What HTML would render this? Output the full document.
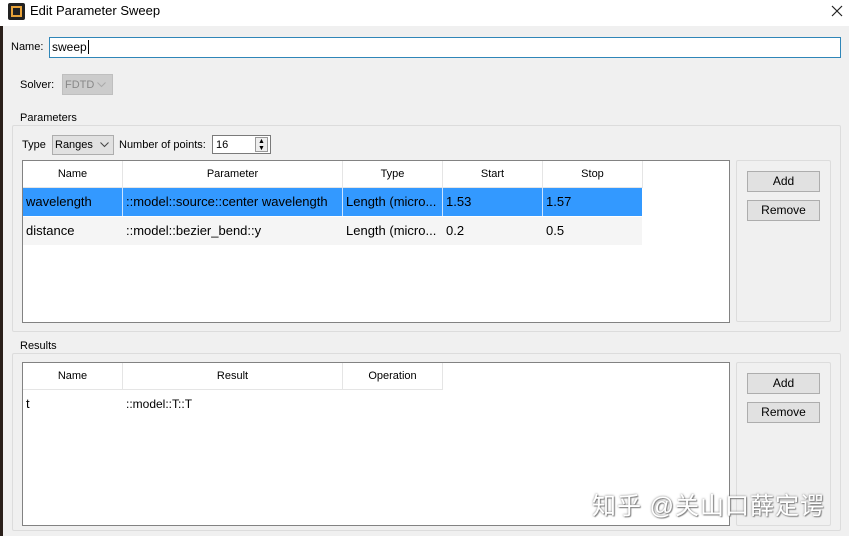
<!DOCTYPE html>
<html><head><meta charset="utf-8"><style>
*{margin:0;padding:0;box-sizing:border-box}
body{width:849px;height:536px;background:#f0f0f0;font-family:"Liberation Sans","Noto Sans CJK SC",sans-serif;font-size:12px;color:#000;position:relative;overflow:hidden}
.a{position:absolute}
.title{left:0;top:0;width:849px;height:26px;background:#fff}
.grp{border:1px solid #dcdcdc;border-radius:2px}
.tbl{background:#fff;border:1px solid #828282}
.hd{background:#fff;border-right:1px solid #e5e5e5;border-bottom:1px solid #e5e5e5;text-align:center;line-height:26px;font-size:11px}
.btn{background:#e1e1e1;border:1px solid #adadad;text-align:center;line-height:18px;font-size:12px}
.cell{font-size:13px;line-height:28px;padding-left:3px;white-space:nowrap}
</style></head><body>
<div class="a title"></div>
<div class="a" style="left:8px;top:3px;width:17px;height:17px;background:#222;border-radius:2px"></div>
<div class="a" style="left:11px;top:6px;width:11px;height:11px;border:2px solid #e8a33a;background:#222"></div>
<div class="a" style="left:30px;top:3px;font-size:13px">Edit Parameter Sweep</div>
<svg class="a" style="left:831px;top:5px" width="12" height="12"><path d="M1 1L11 11M11 1L1 11" stroke="#222" stroke-width="1.2"/></svg>
<div class="a" style="left:0;top:26px;width:3px;height:510px;background:#2a1f1a"></div>

<div class="a" style="left:11px;top:41px;font-size:11px">Name:</div>
<div class="a" style="left:49px;top:37px;width:792px;height:21px;background:#fff;border:1px solid #2f86b8;font-size:12px;padding:2px 0 0 2px">sweep<span style="border-left:1px solid #000;margin-left:1px"></span></div>

<div class="a" style="left:20px;top:79px;font-size:11px">Solver:</div>
<div class="a" style="left:62px;top:74px;width:51px;height:21px;background:#ccc;border:1px solid #bfbfbf;color:#888;font-size:11px;padding:4px 0 0 2px">FDTD</div>
<svg class="a" style="left:97px;top:82px" width="9" height="6"><path d="M0.5 0.5L4.5 4.5L8.5 0.5" stroke="#aaa" fill="none"/></svg>

<div class="a grp" style="left:12px;top:125px;width:829px;height:207px"></div>
<div class="a" style="left:18px;top:112px;background:#f0f0f0;padding:0 2px;font-size:11px">Parameters</div>
<div class="a" style="left:22px;top:139px;font-size:11px">Type</div>
<div class="a" style="left:52px;top:135px;width:62px;height:20px;background:#e1e1e1;border:1px solid #adadad;font-size:11px;padding:3px 0 0 2px">Ranges</div>
<svg class="a" style="left:100px;top:142px" width="9" height="6"><path d="M0.5 0.5L4.5 4.5L8.5 0.5" stroke="#444" fill="none"/></svg>
<div class="a" style="left:119px;top:139px;font-size:11px">Number of points:</div>
<div class="a" style="left:212px;top:135px;width:59px;height:19px;background:#fff;border:1px solid #7a7a7a;font-size:11px;padding:3px 0 0 3px">16</div>
<div class="a" style="left:255px;top:137px;width:13px;height:15px;border:1px solid #999;background:#eee;font-size:7px;line-height:7px;text-align:center">▲<br>▼</div>

<div class="a tbl" style="left:22px;top:160px;width:708px;height:163px"></div>
<div class="a hd" style="left:23px;top:161px;width:100px">Name</div>
<div class="a hd" style="left:123px;top:161px;width:220px">Parameter</div>
<div class="a hd" style="left:343px;top:161px;width:100px">Type</div>
<div class="a hd" style="left:443px;top:161px;width:100px">Start</div>
<div class="a hd" style="left:543px;top:161px;width:100px">Stop</div>
<div class="a" style="left:23px;top:188px;width:619px;height:28px;background:#3399ff"></div>
<div class="a" style="left:122px;top:188px;width:1px;height:28px;background:#cce4ff"></div>
<div class="a" style="left:342px;top:188px;width:1px;height:28px;background:#cce4ff"></div>
<div class="a" style="left:442px;top:188px;width:1px;height:28px;background:#cce4ff"></div>
<div class="a" style="left:542px;top:188px;width:1px;height:28px;background:#cce4ff"></div>
<div class="a" style="left:23px;top:217px;width:619px;height:28px;background:#f5f5f5"></div>
<div class="a cell" style="left:23px;top:188px">wavelength</div>
<div class="a cell" style="left:123px;top:188px">::model::source::center wavelength</div>
<div class="a cell" style="left:343px;top:188px">Length (micro...</div>
<div class="a cell" style="left:443px;top:188px">1.53</div>
<div class="a cell" style="left:543px;top:188px">1.57</div>
<div class="a cell" style="left:23px;top:217px">distance</div>
<div class="a cell" style="left:123px;top:217px">::model::bezier_bend::y</div>
<div class="a cell" style="left:343px;top:217px">Length (micro...</div>
<div class="a cell" style="left:443px;top:217px">0.2</div>
<div class="a cell" style="left:543px;top:217px">0.5</div>

<div class="a grp" style="left:736px;top:160px;width:95px;height:162px"></div>
<div class="a btn" style="left:747px;top:171px;width:73px;height:21px">Add</div>
<div class="a btn" style="left:747px;top:200px;width:73px;height:21px">Remove</div>

<div class="a grp" style="left:12px;top:353px;width:829px;height:178px"></div>
<div class="a" style="left:18px;top:340px;background:#f0f0f0;padding:0 2px;font-size:11px">Results</div>
<div class="a tbl" style="left:22px;top:362px;width:708px;height:164px"></div>
<div class="a hd" style="left:23px;top:363px;width:100px">Name</div>
<div class="a hd" style="left:123px;top:363px;width:220px">Result</div>
<div class="a hd" style="left:343px;top:363px;width:100px">Operation</div>
<div class="a cell" style="left:23px;top:390px">t</div>
<div class="a cell" style="left:123px;top:390px;font-size:12px">::model::T::T</div>

<div class="a grp" style="left:736px;top:362px;width:95px;height:164px"></div>
<div class="a btn" style="left:747px;top:373px;width:73px;height:21px">Add</div>
<div class="a btn" style="left:747px;top:402px;width:73px;height:21px">Remove</div>

<div class="a" style="left:592px;top:486px;font-size:24px;color:#fff;text-shadow:0 0 2px #777,1px 1px 1px #888;letter-spacing:1px">知乎 @关山口薛定谔</div>
</body></html>
